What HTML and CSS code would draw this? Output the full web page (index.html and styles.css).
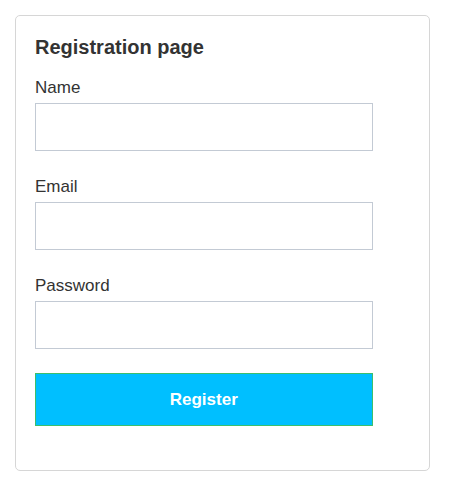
FILE: index.html
```html
<!DOCTYPE html>
<html lang="en">
<head>
<meta charset="utf-8">
<title>Registration page</title>
<link rel="stylesheet" href="styles.css">
</head>
<body>
  <div class="card">
    <h2 class="title">Registration page</h2>
    <form class="form">
      <div class="field">
        <label class="label" for="name">Name</label>
        <input class="input" id="name" type="text">
      </div>
      <div class="field">
        <label class="label" for="email">Email</label>
        <input class="input" id="email" type="email">
      </div>
      <div class="field">
        <label class="label" for="password">Password</label>
        <input class="input" id="password" type="password">
      </div>
      <button class="button" type="button">Register</button>
    </form>
  </div>
</body>
</html>
```

FILE: styles.css
```css
html, body {
  margin: 0;
  padding: 0;
  background: #ffffff;
}

body {
  padding: 15px;
  font-family: "Liberation Sans", Arial, sans-serif;
  color: #333333;
}

.card {
  box-sizing: border-box;
  width: 415px;
  border: 1px solid #d6d6d6;
  border-radius: 5px;
  padding: 20px 19px 20px 19px;
}

.title {
  margin: 0 0 17px 0;
  font-size: 20px;
  font-weight: bold;
  line-height: 23px;
  color: #333333;
}

.form {
  margin: 0;
}

.field {
  margin-bottom: 24px;
}

.label {
  display: block;
  font-size: 17px;
  line-height: 20px;
  padding-top: 2px;
  margin-bottom: 5px;
  color: #333333;
}

.input {
  display: block;
  box-sizing: border-box;
  width: 90%;
  height: 48px;
  margin: 0;
  padding: 0 10px;
  border: 1px solid #c3cad4;
  border-radius: 0;
  background: #ffffff;
  font-family: inherit;
  font-size: 16px;
}

.button {
  display: block;
  box-sizing: border-box;
  width: 90%;
  height: 53px;
  margin: 0 0 24px 0;
  padding: 0;
  border: 1px solid #3cbf6c;
  border-radius: 0;
  background: #00bfff;
  color: #ffffff;
  font-family: inherit;
  font-size: 17px;
  font-weight: bold;
  cursor: pointer;
}
```
